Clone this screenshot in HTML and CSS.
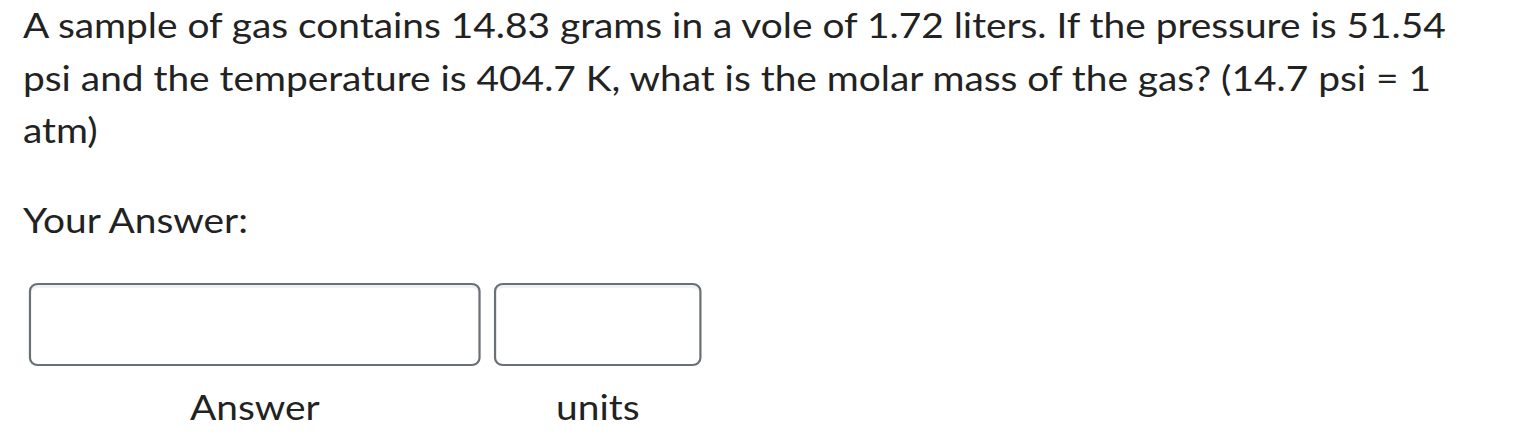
FILE: index.html
```html
<!DOCTYPE html>
<html>
<head>
<meta charset="utf-8">
<link rel="stylesheet" href="styles.css">
</head>
<body>
<div class="page">
  <p class="question">A sample of gas contains 14.83 grams in a vole of 1.72 liters. If the pressure is 51.54 psi and the temperature is 404.7 K, what is the molar mass of the gas? (14.7 psi = 1 atm)</p>
  <p class="your-answer">Your Answer:</p>
  <div class="answer-row">
    <div class="field field-answer">
      <div class="box"></div>
      <span class="label">Answer</span>
    </div>
    <div class="field field-units">
      <div class="box"></div>
      <span class="label">units</span>
    </div>
  </div>
</div>
</body>
</html>
```
FILE: styles.css
```css
html, body {
  margin: 0;
  padding: 0;
  background: #ffffff;
  overflow: hidden;
}
.page {
  padding: 0 0 0 20.7px;
  width: 1310px;
  font-family: Lato, "Noto Sans", sans-serif;
  color: #222222;
  font-size: 35px;
  line-height: 52.5px;
  transform: scaleX(1.11);
  transform-origin: 0 0;
}
.question {
  margin: -2px 0 0 0;
}
.your-answer {
  margin: 37px 0 0 0;
}
.answer-row {
  display: flex;
  gap: 11.7px;
  margin: 38px 0 0 5.4px;
}
.field {
  display: flex;
  flex-direction: column;
  align-items: center;
}
.box {
  box-sizing: border-box;
  height: 83px;
  border: 2px solid #6b7075;
  border-radius: 8px;
  box-shadow: inset 0 3px 0 #eff1f3;
  background: #ffffff;
}
.field-answer .box { width: 407px; }
.field-units .box { width: 187.5px; }
.label {
  margin-top: 14px;
}
```
